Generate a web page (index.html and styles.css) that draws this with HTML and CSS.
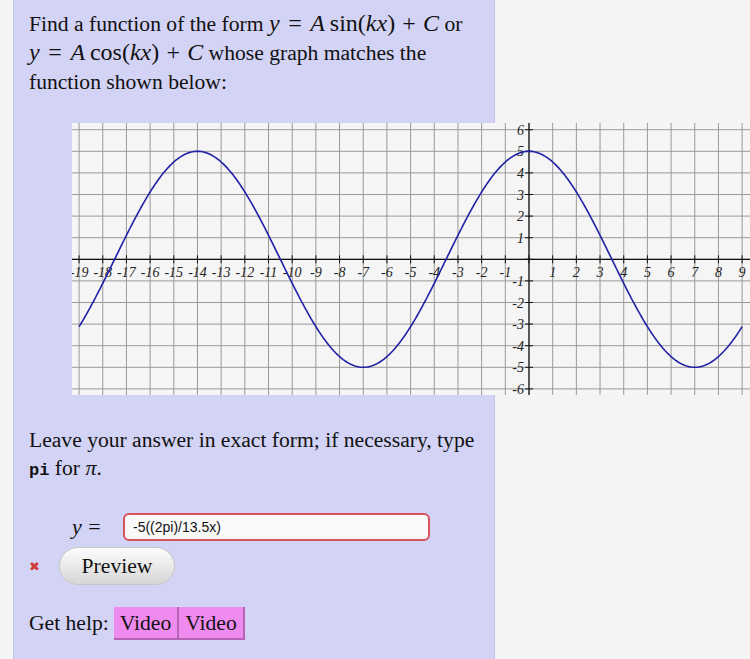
FILE: index.html
```html
<!DOCTYPE html>
<html>
<head>
<meta charset="utf-8">
<title>Sinusoid problem</title>
<link rel="stylesheet" href="styles.css">
</head>
<body>
<div class="panel">
  <p class="q">Find a function of the form <span class="math"><i>y</i><span class="eq">=</span><i>A</i><span class="fn">sin</span>(<i>kx</i>)<span class="op">+</span><i>C</i></span> or <span class="math"><i>y</i><span class="eq">=</span><i>A</i><span class="fn">cos</span>(<i>kx</i>)<span class="op">+</span><i>C</i></span> whose graph matches the function shown below:</p>
  <div class="graph"><svg id="graph" width="680" height="272" viewBox="0 0 680 272"></svg></div>
  <p class="q second">Leave your answer in exact form; if necessary, type <code class="kw">pi</code> for <i class="pi">π</i>.</p>
  <div class="answer-row">
    <span class="math lhs"><i>y</i><span class="eq">=</span></span>
    <input class="answer" type="text" value="-5((2pi)/13.5x)">
  </div>
  <div class="preview-row">
    <span class="wrong">✖</span>
    <button class="preview" type="button">Preview</button>
  </div>
  <div class="help">
    <span>Get help:</span>
    <a class="video">Video</a><a class="video">Video</a>
  </div>
</div>
<script src="script.js"></script>
</body>
</html>
```

FILE: styles.css
```css
html, body {
  margin: 0;
  padding: 0;
}
body {
  width: 750px;
  height: 659px;
  overflow: hidden;
  background: #f4f4f4;
  font-family: "Liberation Serif", "Times New Roman", serif;
  font-size: 21.6px;
  color: #111;
}
.panel {
  margin-left: 13px;
  width: 482px;
  min-height: 720px;
  box-sizing: border-box;
  background: #d3d3f5;
  border-left: 1px solid #c2c2e6;
  border-right: 1px solid #c2c2e6;
  padding: 10px 12px 40px 15px;
}
.q {
  margin: 0;
  line-height: 29px;
}
.q.second {
  margin-top: 31px;
  line-height: 28px;
}
.math {
  white-space: nowrap;
  font-size: 24px;
  line-height: 1;
}
.math i {
  font-style: italic;
}
.math .eq {
  margin: 0 0.36em;
}
.math .op {
  margin: 0 0.3em;
}
.math .fn {
  margin-left: 0.2em;
}
.pi {
  font-size: 22px;
  line-height: 1;
}
.kw {
  font-family: "Liberation Mono", "Courier New", monospace;
  font-weight: bold;
  font-size: 17px;
  line-height: 1;
}
.graph {
  margin: 26px 0 0 43px;
  width: 680px;
  height: 272px;
}
.graph svg {
  display: block;
  background: #f5f5f5;
}
.answer-row {
  display: flex;
  align-items: center;
  margin: 31px 0 0 43px;
}
.lhs {
  width: 51px;
  font-size: 22px;
}
.lhs .eq {
  margin: 0 0.3em;
}
.answer {
  width: 307px;
  height: 28px;
  box-sizing: border-box;
  border: 2px solid #d9515a;
  border-radius: 6px;
  background: #f9f9f9;
  padding: 0 8px;
  font-family: "Liberation Sans", Arial, sans-serif;
  font-size: 14px;
  color: #111;
  outline: none;
}
.preview-row {
  display: flex;
  align-items: center;
  margin-top: 6px;
}
.wrong {
  width: 30px;
  color: #d63a3a;
  font-family: "DejaVu Sans", sans-serif;
  font-size: 13px;
}
.preview {
  width: 116px;
  height: 38px;
  border: 1px solid #c6c6c6;
  border-radius: 19px;
  background: linear-gradient(#fdfdfd, #d6d6d6);
  font-family: "Liberation Serif", "Times New Roman", serif;
  font-size: 21.6px;
  color: #111;
  padding: 0;
}
.help {
  display: flex;
  align-items: center;
  margin-top: 22px;
}
.help span {
  margin-right: 5px;
}
.video {
  display: inline-block;
  height: 33px;
  line-height: 32px;
  box-sizing: border-box;
  padding: 0 6px 0 6px;
  background: #ef8bef;
  border-right: 2px solid #b564b5;
  border-bottom: 2px solid #b564b5;
  color: #111;
}
```

FILE: script.js
```js
(function () {
  var NS = "http://www.w3.org/2000/svg";
  var svg = document.getElementById("graph");
  var ox = 457, oy = 136.3, sx = 23.68, sy = 21.6;
  function el(tag, attrs, text) {
    var e = document.createElementNS(NS, tag);
    for (var k in attrs) e.setAttribute(k, attrs[k]);
    if (text !== undefined) e.textContent = text;
    svg.appendChild(e);
    return e;
  }
  var i, x, y;
  for (i = -19; i <= 10; i++) {
    x = ox + i * sx;
    el("line", { x1: x, y1: 0, x2: x, y2: 272, stroke: "#999", "stroke-width": 1 });
  }
  for (i = -6; i <= 6; i++) {
    y = oy - i * sy;
    el("line", { x1: 0, y1: y, x2: 680, y2: y, stroke: "#999", "stroke-width": 1 });
  }
  el("line", { x1: 0, y1: oy, x2: 680, y2: oy, stroke: "#111", "stroke-width": 1.2 });
  el("line", { x1: ox, y1: 0, x2: ox, y2: 272, stroke: "#111", "stroke-width": 1.2 });
  for (i = -19; i <= 10; i++) {
    x = ox + i * sx;
    el("line", { x1: x, y1: oy - 4, x2: x, y2: oy + 4, stroke: "#111", "stroke-width": 1 });
    if (i !== 0 && i <= 9) {
      el("text", { x: x, y: oy + 17.5, "text-anchor": "middle", "font-family": "Liberation Serif, serif", "font-style": "italic", "font-size": 14, fill: "#222" }, String(i));
    }
  }
  for (i = -6; i <= 6; i++) {
    y = oy - i * sy;
    el("line", { x1: ox - 4, y1: y, x2: ox + 4, y2: y, stroke: "#111", "stroke-width": 1 });
    if (i !== 0) {
      el("text", { x: ox - 5, y: y + 5, "text-anchor": "end", "font-family": "Liberation Serif, serif", "font-style": "italic", "font-size": 14, fill: "#222" }, String(i));
    }
  }
  var d = "";
  for (var t = -19; t <= 9.0001; t += 0.05) {
    var px = ox + t * sx;
    var py = oy - 5 * Math.cos(Math.PI * t / 7) * sy;
    d += (d ? " L" : "M") + px.toFixed(2) + " " + py.toFixed(2);
  }
  el("path", { d: d, fill: "none", stroke: "#2121a6", "stroke-width": 1.6 });
})();
```
